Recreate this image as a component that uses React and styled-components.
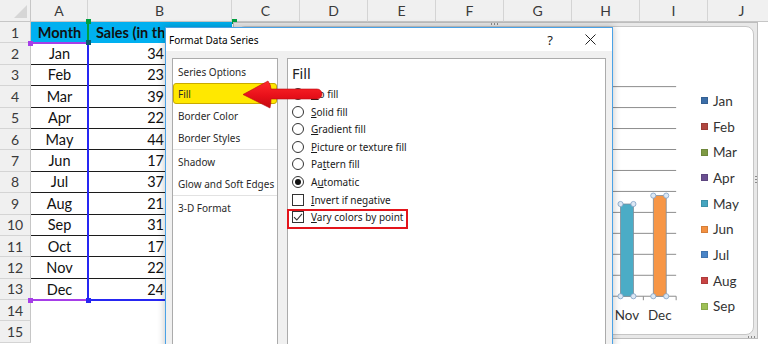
import React from 'react';
import styled, { createGlobalStyle } from 'styled-components';

const GlobalStyle = createGlobalStyle`
  html, body { margin: 0; padding: 0; background: #fff; }
  body { width: 768px; height: 344px; overflow: hidden; }
  #root { width: 768px; height: 344px; }
`;

const Page = styled.div`
  position: relative;
  width: 768px;
  height: 344px;
  overflow: hidden;
  background: #fff;
  font-family: Lato, "Liberation Sans", sans-serif;
`;

/* ---------- spreadsheet ---------- */
const Sheet = styled.div`
  display: grid;
  grid-template-columns: 31px 57px 144px repeat(8, 68px);
  grid-template-rows: 22px repeat(15, 21.4px);
  width: max-content;
`;

const Corner = styled.div`
  position: relative;
  background: #f0f0f0;
  border-right: 1px solid #c6c6c6;
  border-bottom: 1px solid #c6c6c6;
  box-sizing: border-box;
  &::after {
    content: '';
    position: absolute;
    right: 3px;
    bottom: 3px;
    border-left: 13px solid transparent;
    border-bottom: 13px solid #d6d6d6;
  }
`;

const ColHeader = styled.div`
  display: flex;
  align-items: center;
  justify-content: center;
  background: #f0f0f0;
  border-right: 1px solid #d4d4d4;
  border-bottom: 1px solid #c6c6c6;
  box-sizing: border-box;
  font-size: 14px;
  color: #3a3a3a;
`;

const RowHeader = styled(ColHeader)`
  border-right: 1px solid #c6c6c6;
  border-bottom: 1px solid #d4d4d4;
`;

const Cell = styled.div`
  display: flex;
  align-items: center;
  box-sizing: border-box;
  overflow: hidden;
  white-space: nowrap;
  font-size: 14.5px;
  color: #111;
  justify-content: ${p => (p.$align === 'right' ? 'flex-end' : p.$align === 'center' ? 'center' : 'flex-start')};
  padding: ${p => (p.$align === 'right' ? '0 68px 0 0' : p.$align === 'left' ? '0 68px 0 8px' : '0')};
  background: ${p => (p.$head ? '#00b0f0' : '#fff')};
  font-weight: ${p => (p.$head ? 700 : 400)};
  border-bottom: ${p => (p.$ruled ? '1px solid #1c1c1c' : 'none')};
`;

const CellText = styled.span`
  overflow: hidden;
  white-space: nowrap;
`;

/* range highlight overlays */
const Range = styled.div`
  position: absolute;
  left: ${p => p.$x}px;
  top: ${p => p.$y}px;
  width: ${p => p.$w}px;
  height: ${p => p.$h}px;
  box-sizing: border-box;
  border-style: solid;
  border-color: ${p => p.$color};
  border-width: ${p => p.$bw};
  pointer-events: none;
`;

const Handle = styled.span`
  position: absolute;
  width: 5px;
  height: 5px;
  background: ${p => p.$color};
  ${p => (p.$v === 't' ? 'top: -3.5px;' : 'bottom: -3.5px;')}
  ${p => (p.$h === 'l' ? 'left: -3.5px;' : 'right: -3.5px;')}
`;

/* ---------- chart ---------- */
const ChartFrame = styled.div`
  position: absolute;
  left: 233px;
  top: 22px;
  width: 525px;
  height: 317px;
  box-sizing: border-box;
  border: 1px solid #bdbdbd;
  background: #e8e8e8;
  padding: 3px;
`;

const ChartArea = styled.div`
  display: flex;
  height: 100%;
  box-sizing: border-box;
  background: #fff;
  border: 1px solid #c6c6c6;
  border-radius: 8px;
  overflow: hidden;
`;

const Plot = styled.svg`
  flex: 1;
  height: 100%;
  display: block;
  font-family: Lato, "Liberation Sans", sans-serif;
`;

const Legend = styled.ul`
  list-style: none;
  margin: 0;
  width: 63px;
  padding: 61px 0 0 11px;
  box-sizing: border-box;
  display: flex;
  flex-direction: column;
`;

const LegendItem = styled.li`
  height: 25.7px;
  display: flex;
  align-items: center;
  gap: 5px;
  font-size: 13.5px;
  color: #333;
`;

const Swatch = styled.span`
  width: 7px;
  height: 7px;
  background: ${p => p.$c};
  box-shadow: inset 0 0 0 1px rgba(0, 0, 0, 0.12);
`;

const Grip = styled.span`
  position: absolute;
  ${p => p.$pos}
  width: ${p => (p.$vertical ? 2 : 10)}px;
  height: ${p => (p.$vertical ? 10 : 2)}px;
  background-image: radial-gradient(circle, #8a8a8a 0.8px, transparent 1px);
  background-size: ${p => (p.$vertical ? '2px 3px' : '3px 2px')};
`;

/* ---------- dialog ---------- */
const Dialog = styled.div`
  position: absolute;
  left: 165px;
  top: 27px;
  width: 448px;
  height: 330px;
  box-sizing: border-box;
  display: flex;
  flex-direction: column;
  background: #f0f0f0;
  border: 1px solid #4aa2e6;
  border-bottom: none;
  box-shadow: 0 0 7px 1px rgba(0, 0, 0, 0.2);
  font-family: "Noto Sans", "Open Sans", sans-serif;
  font-size: 10px;
  color: #1a1a1a;
`;

const TitleBar = styled.div`
  height: 23px;
  flex: none;
  display: flex;
  align-items: center;
  justify-content: space-between;
  padding-left: 3px;
  background: #fff;
`;

const Title = styled.span`
  font-size: 10px;
  color: #000;
`;

const TitleButtons = styled.div`
  display: flex;
  height: 100%;
`;

const TitleButton = styled.span`
  width: ${p => p.$w}px;
  display: flex;
  align-items: center;
  justify-content: center;
  font-size: 13px;
  color: #222;
`;

const Body = styled.div`
  flex: 1;
  display: flex;
  gap: 9px;
  padding: 7px 6px 0;
  min-height: 0;
`;

const NavPanel = styled.div`
  width: 106px;
  flex: none;
  background: #fff;
  border: 1px solid #ababab;
  box-sizing: border-box;
  padding-top: 1px;
`;

const NavGroup = styled.div`
  & + & {
    border-top: 1px solid #e2e2e2;
  }
`;

const NavItem = styled.div`
  height: 21px;
  margin: 1px 0;
  padding-left: 5px;
  display: flex;
  align-items: center;
  box-sizing: border-box;
  white-space: nowrap;
  color: #2a2a2a;
  ${p =>
    p.$active &&
    `
    background: #ffe800;
    border: 1px solid #c9aa00;
    border-radius: 3px;
    padding-left: 4px;
  `}
`;

const ContentPanel = styled.div`
  flex: 1;
  background: #fff;
  border: 1px solid #ababab;
  box-sizing: border-box;
  padding: 4px 0 0 4px;
`;

const SectionTitle = styled.div`
  font-size: 14.5px;
  line-height: 20px;
  height: 20px;
  margin-bottom: 2.2px;
  color: #222;
`;

const OptionRow = styled.div`
  position: relative;
  height: 17.6px;
  display: flex;
  align-items: center;
  gap: 7px;
  white-space: nowrap;
  ${p =>
    p.$outlined &&
    `
    &::after {
      content: '';
      position: absolute;
      left: -5px;
      top: 0.5px;
      width: 121px;
      height: 20px;
      box-sizing: border-box;
      border: 2px solid #e3141b;
    }
  `}
`;

const Radio = styled.span`
  width: 12px;
  height: 12px;
  flex: none;
  border-radius: 50%;
  border: 1px solid #333;
  box-sizing: border-box;
  background: #fff;
  display: inline-flex;
  align-items: center;
  justify-content: center;
  &::after {
    content: '';
    width: 6px;
    height: 6px;
    border-radius: 50%;
    background: #111;
    display: ${p => (p.$checked ? 'block' : 'none')};
  }
`;

const CheckBox = styled.span`
  width: 12px;
  height: 12px;
  flex: none;
  border: 1px solid #333;
  box-sizing: border-box;
  background: #fff;
  display: inline-flex;
  align-items: center;
  justify-content: center;
`;

const Key = styled.span`
  text-decoration: underline;
`;

const Arrow = styled.svg`
  position: absolute;
  left: 74px;
  top: 50px;
  overflow: visible;
`;

/* ---------- data ---------- */
const months = ['Jan', 'Feb', 'Mar', 'Apr', 'May', 'Jun', 'Jul', 'Aug', 'Sep', 'Oct', 'Nov', 'Dec'];
const sales = [34, 23, 39, 22, 44, 17, 37, 21, 31, 17, 22, 24];
const colors = ['#3c6ea8', '#b0463f', '#7e9a44', '#6a4f91', '#45a5c0', '#f39040', '#4a85c8', '#c84444', '#9dc055', '#3c6ea8', '#4bacc6', '#f79646'];
const cols = ['A', 'B', 'C', 'D', 'E', 'F', 'G', 'H', 'I', 'J'];

const navGroups = [
  ['Series Options', 'Fill', 'Border Color', 'Border Styles'],
  ['Shadow', 'Glow and Soft Edges'],
  ['3-D Format'],
];

const fillOptions = [
  { type: 'radio', key: 'N', rest: 'o fill' },
  { type: 'radio', key: 'S', rest: 'olid fill' },
  { type: 'radio', key: 'G', rest: 'radient fill' },
  { type: 'radio', key: 'P', rest: 'icture or texture fill' },
  { type: 'radio', pre: 'Pa', key: 't', rest: 'tern fill' },
  { type: 'radio', pre: 'A', key: 'u', rest: 'tomatic', checked: true },
  { type: 'check', key: 'I', rest: 'nvert if negative' },
  { type: 'check', key: 'V', rest: 'ary colors by point', checked: true, outlined: true },
];

function SheetGrid() {
  const cells = [<Corner key="corner" />];
  cols.forEach(c => cells.push(<ColHeader key={'h' + c}>{c}</ColHeader>));
  for (let r = 1; r <= 15; r++) {
    cells.push(<RowHeader key={'r' + r}>{r}</RowHeader>);
    if (r === 1) {
      cells.push(<Cell key="a1" $head $align="center">Month</Cell>);
      cells.push(
        <Cell key="b1" $head $align="left">
          <CellText>Sales (in thousands)</CellText>
        </Cell>
      );
    } else if (r <= 13) {
      const ruled = r <= 12;
      cells.push(<Cell key={'a' + r} $align="center" $ruled={ruled}>{months[r - 2]}</Cell>);
      cells.push(<Cell key={'b' + r} $align="right" $ruled={ruled}>{sales[r - 2]}</Cell>);
    } else {
      cells.push(<Cell key={'a' + r} />);
      cells.push(<Cell key={'b' + r} />);
    }
    for (let c = 0; c < 8; c++) cells.push(<Cell key={`x${r}-${c}`} />);
  }
  return <Sheet>{cells}</Sheet>;
}

function ChartPlot() {
  const axisY = 271;
  const top = 60;
  const step = (axisY - top) / 10;
  const x0 = 45;
  const cw = 33;
  const bw = 13;
  const unit = step / 5;
  return (
    <Plot viewBox="0 0 452 309" preserveAspectRatio="xMinYMin meet">
      {Array.from({ length: 10 }, (_, i) => (
        <line key={i} x1={x0} x2={x0 + cw * 12} y1={top + i * step} y2={top + i * step} stroke="#8c8c8c" strokeWidth="1" />
      ))}
      <line x1={x0} x2={x0 + cw * 12} y1={axisY} y2={axisY} stroke="#8c8c8c" strokeWidth="1" />
      {Array.from({ length: 13 }, (_, i) => (
        <line key={'t' + i} x1={x0 + i * cw} x2={x0 + i * cw} y1={axisY} y2={axisY + 4} stroke="#8c8c8c" strokeWidth="1" />
      ))}
      {sales.map((v, i) => {
        const h = v * unit;
        const x = x0 + i * cw + (cw - bw) / 2;
        const y = axisY - h;
        return (
          <g key={'b' + i}>
            <rect x={x} y={y} width={bw} height={h} fill={colors[i]} stroke="#7f8c99" strokeWidth="0.8" />
            {[[x, y], [x + bw, y], [x, axisY], [x + bw, axisY]].map(([cx, cy], k) => (
              <circle key={k} cx={cx} cy={cy} r="2.6" fill="#dce8f5" stroke="#7fa0c4" strokeWidth="0.8" />
            ))}
            <text x={x0 + i * cw + cw / 2} y={axisY + 24} textAnchor="middle" fontSize="13.5" fill="#333">
              {months[i]}
            </text>
          </g>
        );
      })}
    </Plot>
  );
}

function Chart() {
  return (
    <ChartFrame>
      <ChartArea>
        <ChartPlot />
        <Legend>
          {months.slice(0, 9).map((m, i) => (
            <LegendItem key={m}>
              <Swatch $c={colors[i]} />
              {m}
            </LegendItem>
          ))}
        </Legend>
      </ChartArea>
      <Grip $pos="left: 256px; top: 0px;" />
      <Grip $vertical $pos="right: 0px; top: 152px;" />
      <Grip $pos="right: 0px; bottom: 0px;" />
    </ChartFrame>
  );
}

function FormatDialog() {
  return (
    <Dialog>
      <TitleBar>
        <Title>Format Data Series</Title>
        <TitleButtons>
          <TitleButton $w={36}>?</TitleButton>
          <TitleButton $w={44}>
            <svg width="11" height="11" viewBox="0 0 11 11">
              <path d="M0.5 0.5 L10.5 10.5 M10.5 0.5 L0.5 10.5" stroke="#222" strokeWidth="1" fill="none" />
            </svg>
          </TitleButton>
        </TitleButtons>
      </TitleBar>
      <Body>
        <NavPanel>
          {navGroups.map((g, gi) => (
            <NavGroup key={gi}>
              {g.map(item => (
                <NavItem key={item} $active={item === 'Fill'}>
                  {item}
                </NavItem>
              ))}
            </NavGroup>
          ))}
        </NavPanel>
        <ContentPanel>
          <SectionTitle>Fill</SectionTitle>
          {fillOptions.map((o, i) => (
            <OptionRow key={i} $outlined={o.outlined}>
              {o.type === 'radio' ? (
                <Radio $checked={o.checked} />
              ) : (
                <CheckBox>
                  {o.checked && (
                    <svg width="10" height="10" viewBox="0 0 10 10">
                      <path d="M1 5.2 L3.8 8 L9 1.8" stroke="#333" strokeWidth="1.1" fill="none" />
                    </svg>
                  )}
                </CheckBox>
              )}
              <span>
                {o.pre}
                <Key>{o.key}</Key>
                {o.rest}
              </span>
            </OptionRow>
          ))}
        </ContentPanel>
      </Body>
      <Arrow width="82" height="34" viewBox="0 0 82 34">
        <defs>
          <linearGradient id="arrowFill" x1="0" y1="0" x2="0" y2="1">
            <stop offset="0" stopColor="#ff2b2b" />
            <stop offset="0.55" stopColor="#e8101a" />
            <stop offset="1" stopColor="#c40a10" />
          </linearGradient>
        </defs>
        <path
          d="M3 16.5 L28 3 Q31 7 31 11 L77 11 A5 5 0 0 1 77 21 L31 21 Q31 26 30 30 Z"
          fill="url(#arrowFill)"
          stroke="#b80c12"
          strokeWidth="0.6"
          strokeLinejoin="round"
        />
      </Arrow>
    </Dialog>
  );
}

export default function App() {
  return (
    <Page>
      <GlobalStyle />
      <SheetGrid />
      <Range $x={31} $y={42} $w={58} $h={259} $color="#a63ee8" $bw="2px 0 2px 0">
        <Handle $v="t" $h="l" $color="#a63ee8" />
        <Handle $v="b" $h="l" $color="#a63ee8" />
      </Range>
      <Range $x={87} $y={22} $w={146} $h={22} $color="#00a040" $bw="0 0 0 2px">
        <Handle $v="t" $h="l" $color="#00a040" />
        <Handle $v="t" $h="r" $color="#00a040" />
      </Range>
      <Range $x={87} $y={43} $w={146} $h={258} $color="#2626f2" $bw="0 0 2px 2px">
        <Handle $v="t" $h="l" $color="#0b5e6e" />
        <Handle $v="b" $h="l" $color="#2626f2" />
      </Range>
      <Chart />
      <FormatDialog />
    </Page>
  );
}
